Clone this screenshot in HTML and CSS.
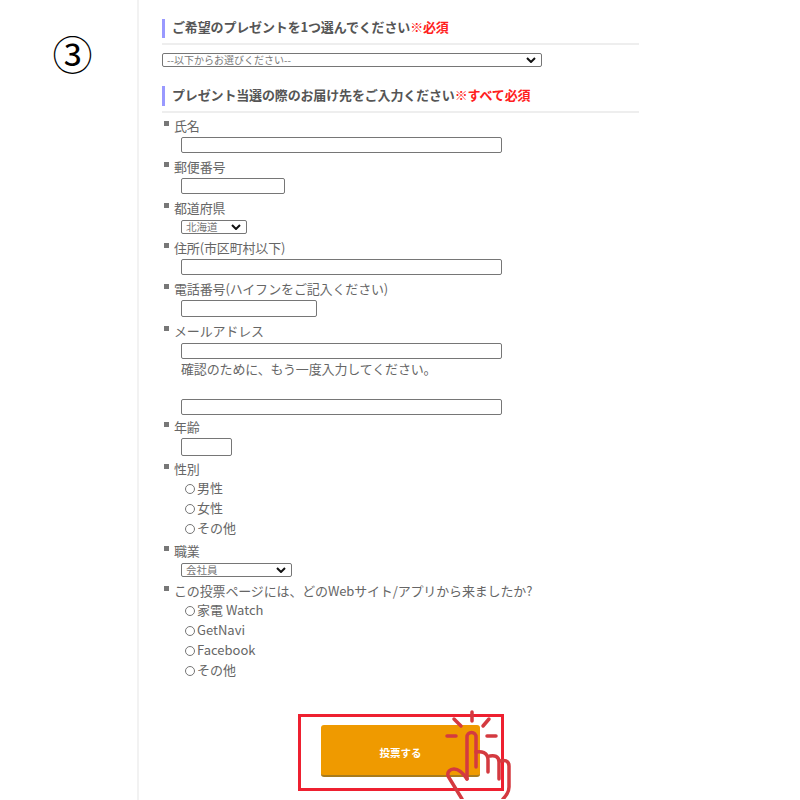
FILE: index.html
```html
<!DOCTYPE html>
<html lang="ja">
<head>
	<meta charset="utf-8">
	<title>投票フォーム</title>
	<link rel="stylesheet" href="styles.css">
</head>

<body>
	<div class="page">
		<div class="step-col">
			<div class="step-num">③</div>
		</div>

		<div class="form-col">
			<h2 class="sec-title">ご希望のプレゼントを1つ選んでください<span class="req">※必須</span></h2>
			<select class="gift-select">
				<option>--以下からお選びください--</option>
			</select>

			<h2 class="sec-title sec-title-second">プレゼント当選の際のお届け先をご入力ください<span class="req">※すべて必須</span></h2>

			<div class="field field-first">
				<div class="field-label">氏名</div>
				<input class="inp inp-long" type="text">
			</div>
			<div class="field">
				<div class="field-label">郵便番号</div>
				<input class="inp inp-zip" type="text">
			</div>
			<div class="field">
				<div class="field-label">都道府県</div>
				<select class="small-select pref-select">
					<option>北海道</option>
				</select>
			</div>
			<div class="field">
				<div class="field-label">住所(市区町村以下)</div>
				<input class="inp inp-long" type="text">
			</div>
			<div class="field">
				<div class="field-label">電話番号(ハイフンをご記入ください)</div>
				<input class="inp inp-tel" type="text">
			</div>
			<div class="field">
				<div class="field-label field-label-mail">メールアドレス</div>
				<input class="inp inp-long" type="text">
				<div class="confirm-note">確認のために、もう一度入力してください。</div>
				<input class="inp inp-long" type="text">
			</div>
			<div class="field field-age">
				<div class="field-label">年齢</div>
				<input class="inp inp-age" type="text">
			</div>
			<div class="field">
				<div class="field-label">性別</div>
				<div class="radio-group">
					<label class="radio-row"><input type="radio" name="sex">男性</label>
					<label class="radio-row"><input type="radio" name="sex">女性</label>
					<label class="radio-row"><input type="radio" name="sex">その他</label>
				</div>
			</div>
			<div class="field">
				<div class="field-label">職業</div>
				<select class="small-select job-select">
					<option>会社員</option>
				</select>
			</div>
			<div class="field">
				<div class="field-label">この投票ページには、どのWebサイト/アプリから来ましたか?</div>
				<div class="radio-group">
					<label class="radio-row"><input type="radio" name="site">家電 Watch</label>
					<label class="radio-row"><input type="radio" name="site">GetNavi</label>
					<label class="radio-row"><input type="radio" name="site">Facebook</label>
					<label class="radio-row"><input type="radio" name="site">その他</label>
				</div>
			</div>

			<div class="submit-area">
				<div class="submit-frame">
					<button class="submit-btn" type="button">投票する</button>
					<!-- pointing hand over the button -->
					<svg class="hand" width="80" height="95" viewBox="0 0 80 95" fill="none" stroke="#d43a40" stroke-width="3.5" stroke-linecap="round" stroke-linejoin="round">
						<path d="M32 8v9M14 15l7 7M49 15l-6 7M7 32h9M47 32h9"/>
						<path d="M27 75V33a4.5 4.5 0 0 1 9 0V63"/>
						<path d="M36 48c5-1 12 0 12 8v12M50 52c4-1 9 0 9 6v17M60 57c4-1 9-1 9 5v21c0 5-3 9-6 12"/>
						<path d="M27 75C23 69 18 65 14 65C10 65 7 68 8 72L22 95"/>
					</svg>
				</div>
			</div>
		</div>
	</div>
</body>

</html>
```

FILE: styles.css
```css
html,
body {
	margin: 0;
	padding: 0;
	height: 800px;
	overflow: hidden;
	background: #fff;
}

body {
	font-family: "Noto Sans CJK JP", "Noto Sans", sans-serif;
	font-size: 13px;
	letter-spacing: -0.15px;
	color: #666;
}

.page {
	display: flex;
	height: 800px;
}

.step-col {
	width: 137px;
	flex-shrink: 0;
	display: flex;
	justify-content: center;
	padding-top: 30px;
	padding-left: 8px;
	box-sizing: border-box;
}

.step-num {
	font-size: 40px;
	line-height: 46px;
	height: 46px;
	letter-spacing: 0;
	color: #000;
}

.form-col {
	width: 477px;
	padding: 19px 0 0 23px;
	border-left: 2px solid #f2f2f2;
}

.sec-title {
	margin: 0;
	height: 19px;
	line-height: 15px;
	padding-left: 7px;
	border-left: 3px solid #9999ff;
	font-size: 13px;
	font-weight: bold;
	color: #555;
	position: relative;
}

/* grey rule below each heading */
.sec-title::after {
	content: "";
	position: absolute;
	left: -3px;
	right: 0;
	bottom: -7px;
	height: 2px;
	background: #eee;
}

.sec-title-second {
	margin-top: 19px;
	height: 20px;
	line-height: 18px;
}

.req {
	color: #ff2020;
}

/* the selects draw their own arrow so the text can be centred in 14px */
.gift-select,
.small-select {
	display: block;
	appearance: none;
	box-sizing: border-box;
	height: 14px;
	line-height: 12px;
	padding: 0 0 0 4px;
	font-family: inherit;
	font-size: 10px;
	letter-spacing: 0;
	color: #777;
	border: 1px solid #767676;
	border-radius: 2px;
	background: #fff url("data:image/svg+xml,%3Csvg xmlns='http://www.w3.org/2000/svg' width='10' height='6' viewBox='0 0 10 6'%3E%3Cpath d='M1 1l4 4 4-4' fill='none' stroke='%23111' stroke-width='2'/%3E%3C/svg%3E") no-repeat right 5px center;
}

.gift-select {
	width: 380px;
	margin-top: 15px;
}

.small-select {
	margin-top: 2px;
	margin-bottom: 1px;
	font-size: 10.5px;
}

.pref-select {
	width: 66px;
}

.job-select {
	width: 111px;
	margin-bottom: 4px;
}

.field {
	padding-left: 19px;
	margin-top: 4px;
	position: relative;
}

.field-first {
	margin-top: 10px;
}

.field-age {
	margin-top: 2px;
	margin-bottom: -1px;
}

/* small square bullet */
.field::before {
	content: "";
	position: absolute;
	left: 2px;
	top: 5px;
	width: 5px;
	height: 5px;
	background: #777;
}

.field-label {
	height: 20px;
	line-height: 20px;
	margin-left: -7px;
	margin-bottom: 1px;
	white-space: nowrap;
}

.field-label-mail {
	margin-bottom: 2px;
}

.inp {
	display: block;
	box-sizing: border-box;
	height: 16px;
	padding: 0 2px;
	background: #fff;
	border: 1px solid #767676;
	border-radius: 2px;
}

.inp-long {
	width: 321px;
}

.inp-zip {
	width: 104px;
}

.inp-tel {
	width: 136px;
	height: 17px;
}

.inp-age {
	width: 51px;
	height: 18px;
}

.confirm-note {
	height: 40px;
	line-height: 20px;
}

.radio-group {
	margin-top: -3px;
}

.radio-row {
	display: flex;
	align-items: center;
	height: 20px;
	padding-left: 4px;
	letter-spacing: 0;
	white-space: nowrap;
}

.radio-row input {
	appearance: none;
	box-sizing: border-box;
	width: 10px;
	height: 10px;
	margin: 3px 2px 0 0;
	background: #fff;
	border: 1px solid #767676;
	border-radius: 50%;
}

.submit-area {
	margin-top: 35px;
	margin-left: 136px;
}

.submit-frame {
	position: relative;
	box-sizing: border-box;
	width: 206px;
	height: 77px;
	padding: 8px 0 0 20px;
	border: 3px solid #ee2030;
}

.submit-btn {
	display: block;
	width: 159px;
	height: 52px;
	padding: 4px 0 0;
	font-family: inherit;
	font-size: 10.5px;
	font-weight: bold;
	letter-spacing: 0;
	color: #fff;
	background: #ef9a00;
	border: none;
	border-bottom: 2px solid #a87c1e;
	border-radius: 3px;
}

.hand {
	position: absolute;
	left: 139px;
	top: -13px;
}
```
